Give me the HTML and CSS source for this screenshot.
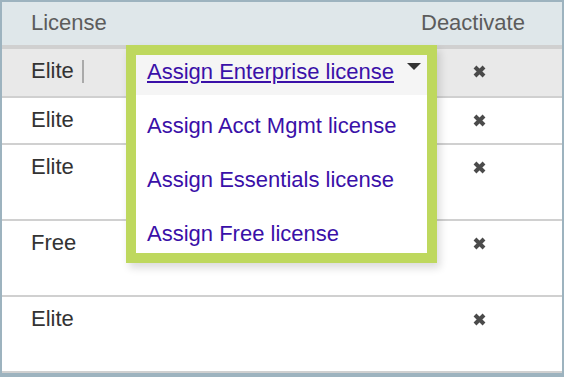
FILE: index.html
```html
<!DOCTYPE html>
<html>
<head>
  <link rel="stylesheet" href="styles.css">
</head>
<body>
  <div class="licenses">
    <div class="row header">
      <div class="cell">License</div>
      <div class="cell deactivate">Deactivate</div>
    </div>

    <div class="row active">
      <div class="cell">Elite <span class="caret"></span></div>
      <div class="cell deactivate"><span class="remove"><svg width="13" height="13" viewBox="0 0 13 13"><path d="M2 2 L11 11 M11 2 L2 11" stroke="#333" stroke-width="4"/></svg></span></div>
    </div>
    <div class="row">
      <div class="cell">Elite</div>
      <div class="cell deactivate"><span class="remove"><svg width="13" height="13" viewBox="0 0 13 13"><path d="M2 2 L11 11 M11 2 L2 11" stroke="#333" stroke-width="4"/></svg></span></div>
    </div>
    <div class="row tall">
      <div class="cell">Elite</div>
      <div class="cell deactivate"><span class="remove"><svg width="13" height="13" viewBox="0 0 13 13"><path d="M2 2 L11 11 M11 2 L2 11" stroke="#333" stroke-width="4"/></svg></span></div>
    </div>
    <div class="row tall">
      <div class="cell">Free</div>
      <div class="cell deactivate"><span class="remove"><svg width="13" height="13" viewBox="0 0 13 13"><path d="M2 2 L11 11 M11 2 L2 11" stroke="#333" stroke-width="4"/></svg></span></div>
    </div>
    <div class="row tall">
      <div class="cell">Elite</div>
      <div class="cell deactivate"><span class="remove"><svg width="13" height="13" viewBox="0 0 13 13"><path d="M2 2 L11 11 M11 2 L2 11" stroke="#333" stroke-width="4"/></svg></span></div>
    </div>

    <!-- license picker, open over the first row -->
    <div class="picker">
      <div class="picker-current">
        <a href="#" class="picker-link selected">Assign Enterprise license</a>
        <svg class="picker-arrow" width="14" height="8" viewBox="0 0 14 8"><polygon points="0,0 14,0 7,7" fill="#333"/></svg>
      </div>
      <div class="picker-options">
        <a href="#" class="picker-link">Assign Acct Mgmt license</a>
        <a href="#" class="picker-link">Assign Essentials license</a>
        <a href="#" class="picker-link">Assign Free license</a>
      </div>
    </div>
  </div>
</body>
</html>
```

FILE: styles.css
```css
body {
  margin: 0;
  font-family: "Liberation Sans", Arial, Helvetica, sans-serif;
  font-size: 22px;
  color: #333;
}
.licenses {
  position: relative;
  width: 560px;
  height: 371px;
  border: 2px solid #9db3bf;
  border-bottom-width: 4px;
  background: #fff;
  overflow: hidden;
}
.row {
  display: grid;
  grid-template-columns: 1fr 150px;
  height: 45px;
  border-bottom: 2px solid #d0d0d0;
  box-sizing: content-box;
}
.row.header {
  height: 43px;
  border-bottom-width: 4px;
  background: #dfe7ea;
  color: #5c5c5c;
}
.row.header .cell {
  padding-top: 10px;
}
.row.active {
  height: 47px;
  background: #e9e9e9;
}
.row.tall {
  height: 74px;
}
.cell {
  padding: 11px 0 0 29px;
  line-height: 22px;
  display: flex;
  align-items: flex-start;
}
.cell.deactivate {
  padding-left: 9px;
}
.remove {
  display: flex;
  align-items: center;
  height: 22px;
  margin-left: 52px;
  opacity: 0.88;
}
.caret {
  display: inline-block;
  width: 0;
  height: 23px;
  margin: 0 0 0 8px;
  border-left: 2px solid #aaa;
}
.picker {
  position: absolute;
  left: 124px;
  top: 43px;
  width: 291px;
  border: 10px solid #bed85e;
  background: #fff;
  box-shadow: 3px 5px 8px rgba(0, 0, 0, 0.14);
}
.picker-current {
  height: 40px;
  padding: 6px 6px 0 11px;
  box-sizing: border-box;
  background: #f5f5f5;
  display: flex;
  justify-content: space-between;
  align-items: flex-start;
}
.picker-arrow {
  margin-top: 2px;
}
.picker-options {
  display: flex;
  flex-direction: column;
  gap: 32px;
  padding: 20px 11px 8px;
}
.picker-link {
  color: #3a10a8;
  text-decoration: none;
  line-height: 22px;
}
.picker-link.selected {
  text-decoration: underline;
  text-underline-offset: 2px;
}
```
